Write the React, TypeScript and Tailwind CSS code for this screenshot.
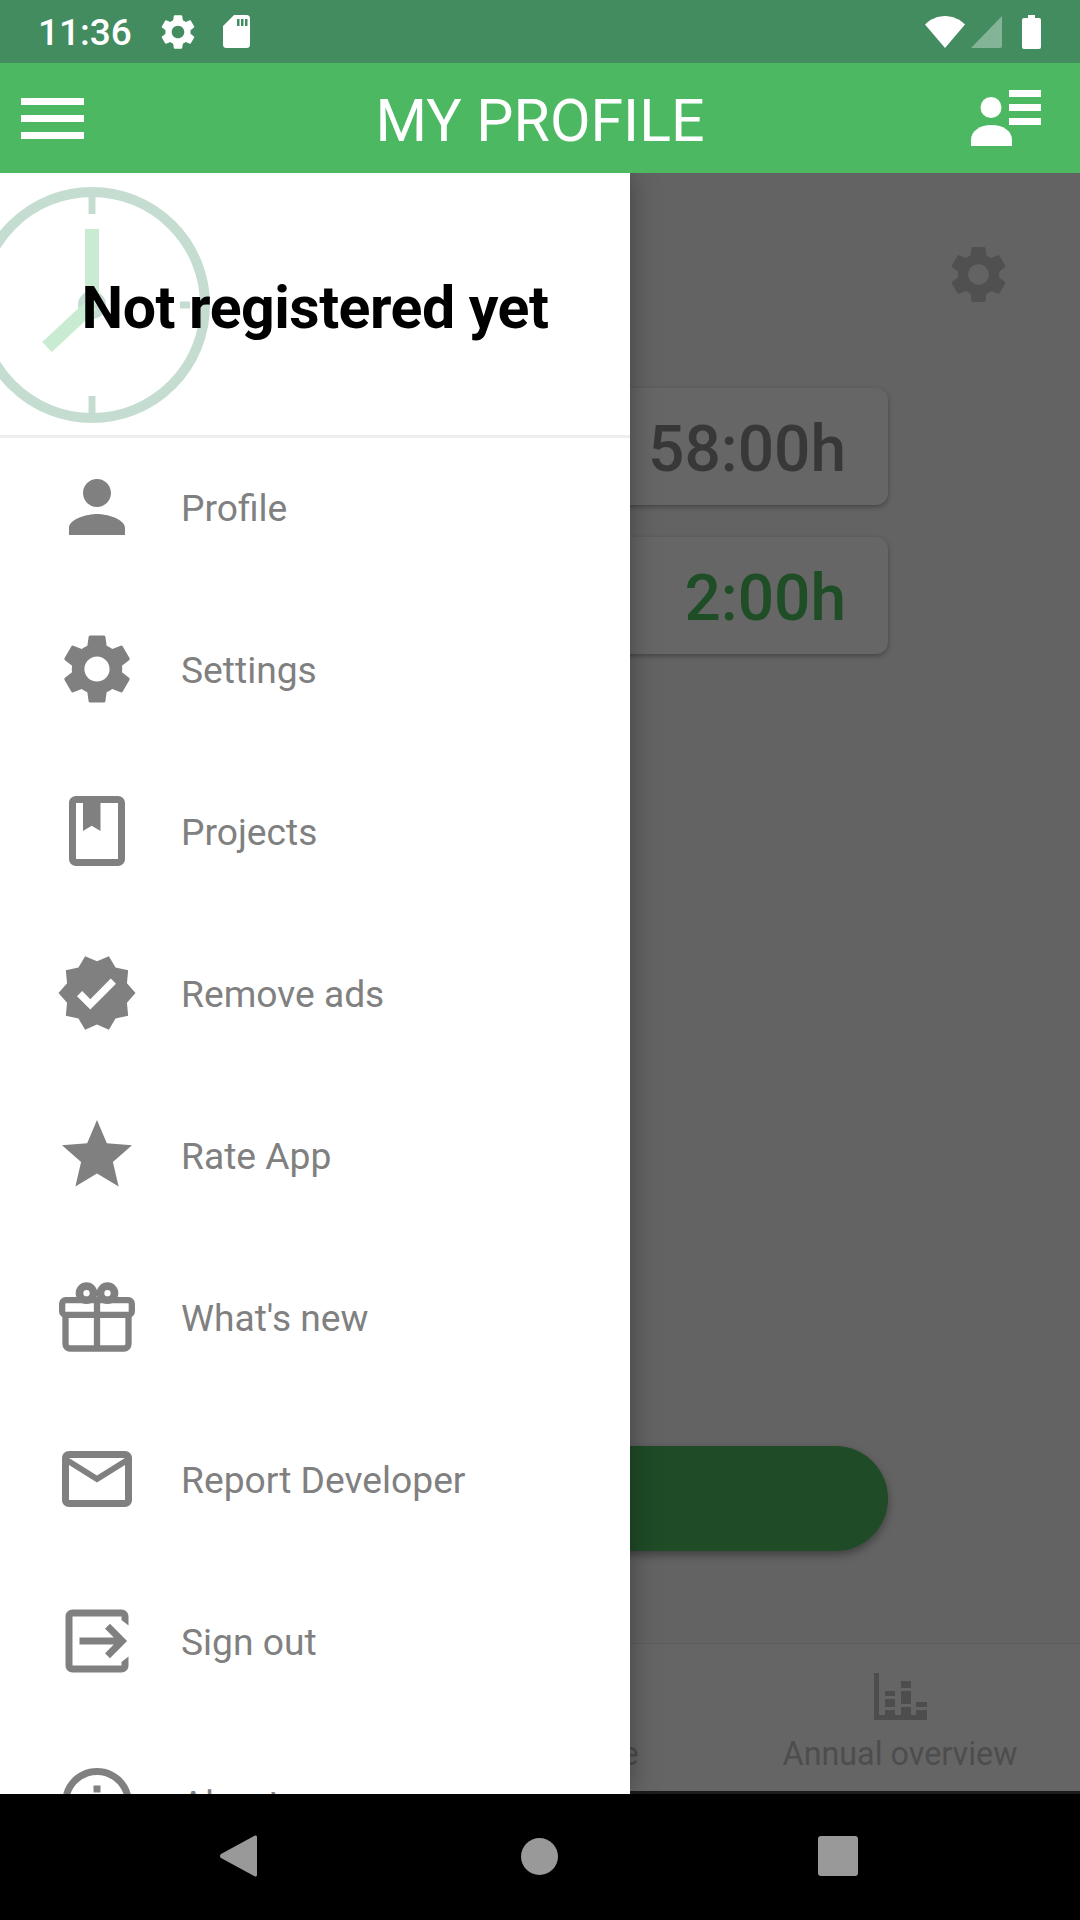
import type { ReactNode } from 'react';

const FONT = "font-['Roboto',sans-serif]";

const GEAR =
  'M19.14,12.94c0.04-0.3,0.06-0.61,0.06-0.94c0-0.32-0.02-0.64-0.07-0.94l2.03-1.58c0.18-0.14,0.23-0.41,0.12-0.61l-1.92-3.32c-0.12-0.22-0.37-0.29-0.59-0.22l-2.39,0.96c-0.5-0.38-1.03-0.7-1.62-0.94L14.4,2.81c-0.04-0.24-0.24-0.41-0.48-0.41h-3.84c-0.24,0-0.43,0.17-0.47,0.41L9.25,5.35C8.66,5.59,8.12,5.92,7.63,6.29L5.24,5.33c-0.22-0.08-0.47,0-0.59,0.22L2.74,8.87C2.62,9.08,2.66,9.34,2.86,9.48l2.03,1.58C4.84,11.36,4.8,11.69,4.8,12s0.02,0.64,0.07,0.94l-2.03,1.58c-0.18,0.14-0.23,0.41-0.12,0.61l1.92,3.32c0.12,0.22,0.37,0.29,0.59,0.22l2.39-0.96c0.5,0.38,1.03,0.7,1.62,0.94l0.36,2.54c0.05,0.24,0.24,0.41,0.48,0.41h3.84c0.24,0,0.44-0.17,0.47-0.41l0.36-2.54c0.59-0.24,1.13-0.56,1.62-0.94l2.39,0.96c0.22,0.08,0.47,0,0.59-0.22l1.92-3.32c0.12-0.22,0.07-0.47-0.12-0.61L19.14,12.94z M12,15.6c-1.98,0-3.6-1.62-3.6-3.6s1.62-3.6,3.6-3.6s3.6,1.62,3.6,3.6S13.98,15.6,12,15.6z';

function Icon({ children, className }: { children: ReactNode; className?: string }) {
  return (
    <svg viewBox="0 0 24 24" fill="currentColor" className={className}>
      {children}
    </svg>
  );
}

const menu: { label: string; icon: ReactNode }[] = [
  {
    label: 'Profile',
    icon: <path d="M12 12c2.21 0 4-1.79 4-4s-1.79-4-4-4-4 1.79-4 4 1.79 4 4 4zm0 2c-2.67 0-8 1.34-8 4v2h16v-2c0-2.66-5.33-4-8-4z" />,
  },
  { label: 'Settings', icon: <path d={GEAR} /> },
  {
    label: 'Projects',
    icon: <path d="M18 2H6c-1.1 0-2 .9-2 2v16c0 1.1.9 2 2 2h12c1.1 0 2-.9 2-2V4c0-1.1-.9-2-2-2zm0 18H6V4h2v8l2.5-1.500L13 12V4h5v16z" />,
  },
  {
    label: 'Remove ads',
    icon: <path d="M23 12l-2.44-2.79.34-3.69-3.61-.82-1.89-3.2L12 2.96 8.6 1.5 6.71 4.69 3.1 5.5l.34 3.7L1 12l2.44 2.79-.34 3.7 3.61.82L8.6 22.5l3.4-1.47 3.4 1.46 1.89-3.19 3.61-.82-.34-3.69L23 12zm-12.91 4.72l-3.8-3.81 1.48-1.48 2.32 2.33 5.85-5.87 1.48 1.48-7.33 7.35z" />,
  },
  {
    label: 'Rate App',
    icon: <path d="M12 17.27L18.18 21l-1.64-7.03L22 9.24l-7.19-.61L12 2 9.19 8.63 2 9.24l5.46 4.73L5.82 21z" />,
  },
  {
    label: "What's new",
    icon: (
      <g fill="none" stroke="currentColor" strokeWidth="1.8" transform="translate(0 0.600)">
        <rect x="2.050" y="6.600" width="19.900" height="4.200" rx="1" />
        <path d="M3 10.800V19.100a1.300 1.300 0 0 0 1.300 1.300h15.400a1.300 1.300 0 0 0 1.300-1.300v-8.300M12 6.600v13.800" />
        <circle cx="9" cy="4.600" r="2" strokeWidth="2.200" />
        <circle cx="15" cy="4.600" r="2" strokeWidth="2.200" />
      </g>
    ),
  },
  {
    label: 'Report Developer',
    icon: <path d="M20 4H4c-1.1 0-1.99.9-1.99 2L2 18c0 1.1.9 2 2 2h16c1.1 0 2-.9 2-2V6c0-1.1-.9-2-2-2zm0 14H4V8l8 5 8-5v10zm-8-7L4 6h16l-8 5z" />,
  },
  {
    label: 'Sign out',
    icon: (
      <path d="M20.600 12l-4.900 4.900-1.400-1.400L16.800 13H7v-2h9.800l-2.500-2.500 1.400-1.400zM5 3h14c1.100 0 2 .9 2 2v2.600L19 6V5H5v14h14v-1l2-1.600V19c0 1.100-.9 2-2 2H5c-1.100 0-2-.9-2-2V5c0-1.100.9-2 2-2z" />
    ),
  },
  {
    label: 'About',
    icon: <path d="M11 7h2v2h-2zm0 4h2v6h-2zm1-9C6.48 2 2 6.48 2 12s4.48 10 10 10 10-4.48 10-10S17.52 2 12 2zm0 18c-4.41 0-8-3.59-8-8s3.59-8 8-8 8 3.59 8 8-3.59 8-8 8z" />,
  },
];

function StatusBar() {
  return (
    <div className="h-[63px] shrink-0 bg-[#428c60] flex items-center pl-[38px] pr-[39px] text-white">
      <span className="text-[37px] leading-none w-[123px] font-medium mt-[2px]">11:36</span>
      <Icon className="w-[42px] h-[42px] -ml-[4px]">
        <path d={GEAR} />
      </Icon>
      <svg viewBox="0 0 27 33" fill="currentColor" className="w-[27px] h-[33px] ml-[24px]">
        <path d="M11 0h12.500A3.500 3.500 0 0 1 27 3.500v26a3.500 3.500 0 0 1-3.500 3.500h-20A3.500 3.500 0 0 1 0 29.500V11zM14 4v7h2.500V4zm4 0v7h2.500V4zm4 0v7h2.500V4z" fillRule="evenodd" />
      </svg>
      <div className="flex-1" />
      <svg viewBox="0 0 40 32" fill="currentColor" className="w-[40px] h-[32px]">
        <path d="M20 32L0 8.500C5 3.500 12 0 20 0s15 3.500 20 8.500z" />
      </svg>
      <svg viewBox="0 0 31 32" fill="currentColor" className="w-[31px] h-[32px] ml-[6px] opacity-35">
        <path d="M31 0v30a2 2 0 0 1-2 2H0z" />
      </svg>
      <svg viewBox="0 0 19 34" fill="currentColor" className="w-[19px] h-[34px] ml-[20px]">
        <path d="M6 0h7v3h4a2 2 0 0 1 2 2v27a2 2 0 0 1-2 2H2a2 2 0 0 1-2-2V5a2 2 0 0 1 2-2h4z" />
      </svg>
    </div>
  );
}

function Toolbar() {
  return (
    <div className="h-[110px] shrink-0 bg-[#4cb962] relative z-10 flex items-center pl-[21px] pr-[39px] text-white">
      <div className="w-[88px]">
        <div className="flex flex-col gap-[10px] w-[63px]">
          <div className="h-[7px] bg-white" />
          <div className="h-[7px] bg-white" />
          <div className="h-[7px] bg-white" />
        </div>
      </div>
      <span className="flex-1 text-center text-[59px] leading-none font-normal mt-[4px]">MY PROFILE</span>
      <svg viewBox="0 0 70 56" fill="currentColor" className="w-[70px] h-[56px]">
        <ellipse cx="20" cy="17.500" rx="10.500" ry="10.500" />
        <path d="M0 56v-6c0-9 9-15 20.500-15S41 41 41 50v6z" />
        <path d="M38 0h32v7H38zM38 14h32v7H38zM38 28h32v7H38z" />
      </svg>
    </div>
  );
}

function ValueCard({ value, color, className }: { value: string; color: string; className: string }) {
  return (
    <div className={`h-[117px] rounded-[12px] bg-[#666666] shadow-[0_2px_5px_rgba(0,0,0,0.3)] flex items-center justify-end pr-[42px] pt-[6px] ${className}`}>
      <span className={`text-[64px] leading-none font-medium ${color}`}>{value}</span>
    </div>
  );
}

// dimmed page behind the drawer
function Background() {
  return (
    <div className="absolute inset-0 bg-[#636363] flex flex-col">
      <div className="flex-1 flex flex-col items-end pr-[192px] relative">
        <Icon className="w-[69px] h-[69px] text-[#505050] absolute right-[67px] top-[67px]">
          <path d={GEAR} />
        </Icon>
        <ValueCard value="58:00h" color="text-[#383838]" className="w-[400px] mt-[215px]" />
        <ValueCard value="2:00h" color="text-[#1e4d26]" className="w-[400px] mt-[32px]" />
        <div className="flex-1" />
        <div className="w-[500px] h-[105px] rounded-full bg-[#1f4b27] shadow-[0_4px_8px_rgba(0,0,0,0.35)] mb-[92px]" />
      </div>
      <div className="h-[148px] bg-[#656565] border-t border-[#5d5d5d] grid grid-cols-3">
        <div />
        <div className="flex flex-col items-center justify-end pb-[15px]">
          <span className="text-[32.300px] leading-[44px] text-[#4d4d4d] w-[190px] text-right whitespace-nowrap">Time balance</span>
        </div>
        <div className="flex flex-col items-center pt-[29px]">
          <svg viewBox="0 0 53 47" fill="currentColor" className="w-[53px] h-[47px] text-[#4d4d4d]">
            <path d="M0 0h5v42h48v5H0zM11 18h10v5H11zM11 26h10v8H11zM11 37h10v5H11zM27 8h10v7H27zM27 18h10v13H27zM27 34h10v8H27zM42 29h11v5H42zM42 37h11v5H42z" />
          </svg>
          <span className="text-[32.300px] leading-[44px] text-[#4d4d4d] mt-[12px]">Annual overview</span>
        </div>
      </div>
      <div className="h-[3px] bg-[#1c1c1c]" />
    </div>
  );
}

function ClockLogo() {
  return (
    <svg viewBox="0 0 240 240" className="absolute left-[-28px] top-[12px] w-[240px] h-[240px]">
      <circle cx="120" cy="120" r="113" fill="none" stroke="#c5ddd0" strokeWidth="10" />
      <path d="M120 10v19M120 211v19M208 120h10" stroke="#c5ddd0" strokeWidth="7" fill="none" />
      <circle cx="120" cy="120" r="14" fill="#c5ddd0" />
      <path d="M120 120V44M120 120L75 162" stroke="#c8ebd1" strokeWidth="14" fill="none" />
    </svg>
  );
}

function Drawer() {
  return (
    <div className="absolute left-0 top-0 bottom-0 w-[630px] bg-white shadow-[0_0_26px_rgba(0,0,0,0.35)] overflow-hidden">
      <div className="relative h-[265px] border-b-[3px] border-[#eeeeee] flex items-center overflow-hidden">
        <ClockLogo />
        <span className="relative w-full text-center text-[59px] tracking-[-0.5px] leading-none font-bold text-black mt-[6px]">
          Not registered yet
        </span>
      </div>
      <div className="flex flex-col -mt-[10px]">
        {menu.map((item) => (
          <div key={item.label} className="h-[162px] shrink-0 flex items-center text-[#808080]">
            <Icon className="w-[84px] h-[84px] ml-[55px] mb-[4px] shrink-0">{item.icon}</Icon>
            <span className="ml-[42px] text-[37.200px] leading-none">{item.label}</span>
          </div>
        ))}
      </div>
    </div>
  );
}

function NavBar() {
  return (
    <div className="h-[126px] shrink-0 bg-black relative z-10 flex items-center justify-between pl-[220px] pr-[222px] pb-[2px]">
      <svg viewBox="0 0 37 42" fill="#999999" className="w-[37px] h-[42px]">
        <path d="M35 .5a1.500 1.500 0 0 1 2 1.500v38a1.500 1.500 0 0 1-2 1.500L1 23a2.500 2.500 0 0 1 0-4z" />
      </svg>
      <div className="w-[37px] h-[37px] rounded-full bg-[#999999] ml-[4px]" />
      <div className="w-[40px] h-[40px] rounded-[3px] bg-[#999999]" />
    </div>
  );
}

export default function App() {
  return (
    <div className={`w-[1080px] h-[1920px] flex flex-col overflow-hidden ${FONT}`}>
      <StatusBar />
      <Toolbar />
      <div className="flex-1 relative overflow-hidden">
        <Background />
        <Drawer />
      </div>
      <NavBar />
    </div>
  );
}
